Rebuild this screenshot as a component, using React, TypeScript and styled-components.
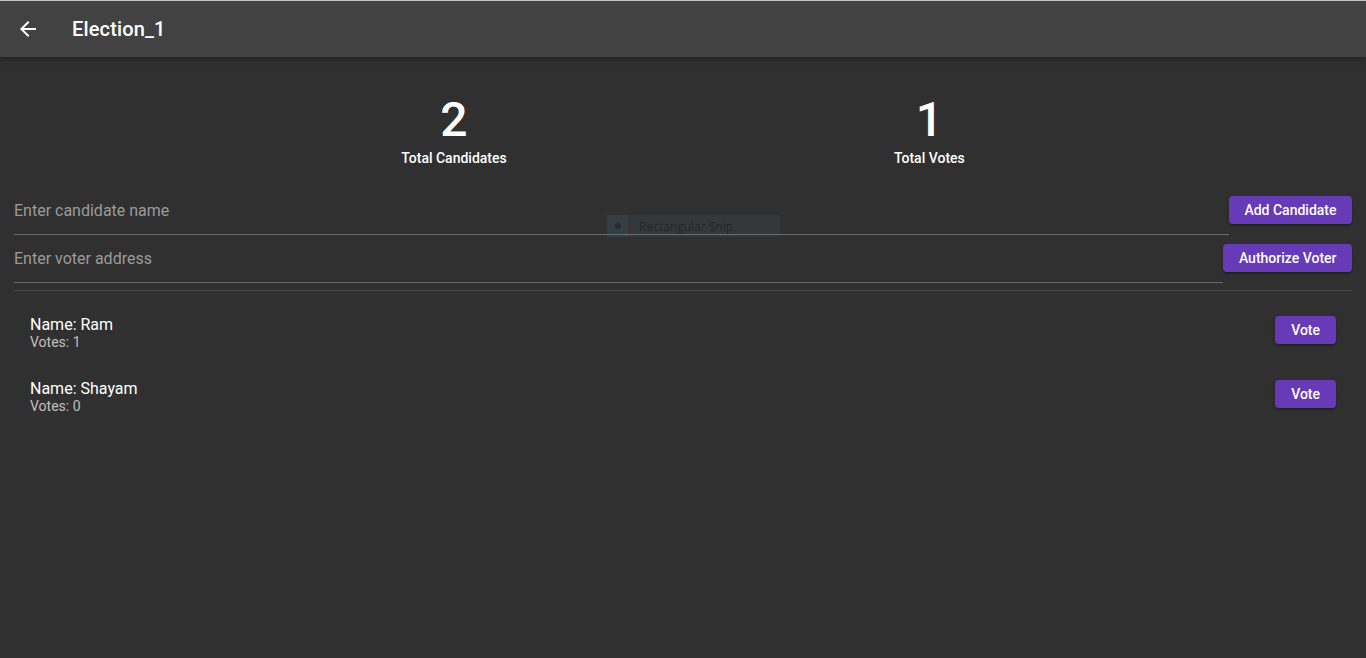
import styled, { createGlobalStyle } from "styled-components";

const GlobalStyle = createGlobalStyle`
    html, body {
        margin: 0;
        padding: 0;
    }

    body {
        background-color: #303030;
        border-top: 1px solid #c2c2c2;
        font-family: Roboto, "Liberation Sans", Arial, sans-serif;
        color: #ffffff;
    }

    * {
        box-sizing: border-box;
    }
`;

const Page = styled.div`
    min-height: calc(100vh - 1px);
    background-color: #303030;
`;

const AppBar = styled.header`
    display: flex;
    align-items: center;
    gap: 32px;
    height: 56px;
    padding: 0 16px;
    background-color: #424242;
    box-shadow: 0 2px 4px -1px rgba(0, 0, 0, 0.2), 0 4px 5px 0 rgba(0, 0, 0, 0.14);
`;

const BackButton = styled.button`
    display: flex;
    align-items: center;
    justify-content: center;
    width: 24px;
    height: 24px;
    padding: 0;
    border: none;
    background: none;
    color: #ffffff;
    cursor: pointer;
`;

const Title = styled.h1`
    margin: 0;
    font-size: 20px;
    font-weight: 500;
    letter-spacing: 0.15px;
`;

const Main = styled.main`
    padding: 35px 14px 0;
`;

const Stats = styled.section`
    display: flex;
    justify-content: space-evenly;
`;

const Stat = styled.div`
    display: flex;
    flex-direction: column;
    align-items: center;
`;

const StatNumber = styled.span`
    font-size: 48px;
    font-weight: 500;
    line-height: 56px;
`;

const StatLabel = styled.span`
    font-size: 14px;
    font-weight: 500;
    line-height: 20px;
`;

const Form = styled.section`
    margin-top: 19px;
`;

const FieldRow = styled.div`
    display: flex;
    align-items: center;
`;

const TextInput = styled.input`
    flex: 1;
    height: 48px;
    padding: 0;
    border: none;
    border-bottom: 1px solid #6a6a6a;
    background: transparent;
    outline: none;
    font-family: inherit;
    font-size: 16px;
    color: #ffffff;

    &::placeholder {
        color: #9b9b9b;
    }
`;

const Button = styled.button`
    height: 28px;
    padding: 0 16px;
    border: none;
    border-radius: 4px;
    background-color: #673ab7;
    color: #ffffff;
    font-family: inherit;
    font-size: 14px;
    font-weight: 500;
    white-space: nowrap;
    box-shadow: 0 3px 1px -2px rgba(0, 0, 0, 0.2), 0 2px 2px 0 rgba(0, 0, 0, 0.14), 0 1px 5px 0 rgba(0, 0, 0, 0.12);
    cursor: pointer;
`;

const FormButton = styled(Button)`
    margin-bottom: 3px;
    padding: 0 15.5px;
`;

const Divider = styled.hr`
    margin: 7px 0 0;
    height: 1px;
    border: none;
    background-color: rgba(255, 255, 255, 0.12);
`;

const List = styled.ul`
    list-style: none;
    margin: 0;
    padding: 8px 0;
`;

const Item = styled.li`
    display: flex;
    align-items: center;
    justify-content: space-between;
    height: 64px;
    padding: 0 16px;
`;

const ItemText = styled.div`
    display: flex;
    flex-direction: column;
    padding-top: 5px;
`;

const ItemName = styled.span`
    font-size: 16px;
    line-height: 18px;
`;

const ItemVotes = styled.span`
    font-size: 14px;
    line-height: 17px;
    color: rgba(255, 255, 255, 0.7);
`;

const VoteButton = styled(Button)`
    margin-bottom: 2px;
`;

// leftover snipping-tool tooltip that sits over the form in the screenshot
const SnipHint = styled.div`
    position: absolute;
    top: 215px;
    left: 607px;
    display: flex;
    align-items: center;
    width: 173px;
    height: 22px;
    background-color: rgba(90, 130, 150, 0.1);
    font-family: "Open Sans", "Noto Sans", sans-serif;
    font-size: 12px;
    color: rgba(0, 0, 0, 0.35);
`;

const SnipIcon = styled.span`
    display: flex;
    align-items: center;
    justify-content: center;
    width: 21px;
    height: 100%;
    margin-right: 11px;
    background-color: rgba(90, 140, 200, 0.08);

    &::after {
        content: "";
        width: 6px;
        height: 6px;
        border-radius: 50%;
        background-color: rgba(0, 0, 0, 0.3);
    }
`;

const candidates = [
    { name: "Ram", votes: 1 },
    { name: "Shayam", votes: 0 },
];

export default function App() {
    const totalVotes = candidates.reduce((sum, c) => sum + c.votes, 0);

    return (
        <Page>
            <GlobalStyle />
            <AppBar>
                <BackButton aria-label="back">
                    <svg width="24" height="24" viewBox="0 0 24 24" fill="currentColor">
                        <path d="M20 11H7.83l5.59-5.59L12 4l-8 8 8 8 1.41-1.41L7.83 13H20v-2z" />
                    </svg>
                </BackButton>
                <Title>Election_1</Title>
            </AppBar>

            <Main>
                <Stats>
                    <Stat>
                        <StatNumber>{candidates.length}</StatNumber>
                        <StatLabel>Total Candidates</StatLabel>
                    </Stat>
                    <Stat>
                        <StatNumber>{totalVotes}</StatNumber>
                        <StatLabel>Total Votes</StatLabel>
                    </Stat>
                </Stats>

                <Form>
                    <FieldRow>
                        <TextInput placeholder="Enter candidate name" />
                        <FormButton>Add Candidate</FormButton>
                    </FieldRow>
                    <FieldRow>
                        <TextInput placeholder="Enter voter address" />
                        <FormButton>Authorize Voter</FormButton>
                    </FieldRow>
                </Form>

                <Divider />

                <List>
                    {candidates.map((c) => (
                        <Item key={c.name}>
                            <ItemText>
                                <ItemName>Name: {c.name}</ItemName>
                                <ItemVotes>Votes: {c.votes}</ItemVotes>
                            </ItemText>
                            <VoteButton>Vote</VoteButton>
                        </Item>
                    ))}
                </List>
            </Main>

            <SnipHint>
                <SnipIcon />
                Rectangular Snip
            </SnipHint>
        </Page>
    );
}
